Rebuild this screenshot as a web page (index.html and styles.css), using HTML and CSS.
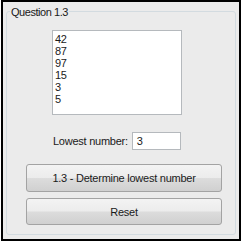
FILE: index.html
```html
<!DOCTYPE html>
<html>
<head>
<meta charset="utf-8">
<link rel="stylesheet" href="styles.css">
</head>
<body>
<div class="frame">
  <div class="group">
    <span class="legend">Question 1.3</span>
    <div class="listbox">
      <div>42</div>
      <div>87</div>
      <div>97</div>
      <div>15</div>
      <div>3</div>
      <div>5</div>
    </div>
    <div class="row">
      <span class="label">Lowest number:</span>
      <div class="input">3</div>
    </div>
    <div class="btn btn-first">1.3 - Determine lowest number</div>
    <div class="btn btn-second">Reset</div>
  </div>
</div>
</body>
</html>
```

FILE: styles.css
```css
html, body {
  margin: 0;
  padding: 0;
  background: #ffffff;
}
body {
  font-family: "Liberation Sans", Arial, sans-serif;
  font-size: 11px;
  letter-spacing: -0.25px;
  color: #1a1a1a;
}
.frame {
  margin-left: 1px;
  width: 240px;
  height: 241px;
  box-sizing: border-box;
  border: 2px solid #000;
  background: #ebebeb;
  padding: 9px 0 0 3px;
}
.group {
  position: relative;
  width: 230px;
  height: 224px;
  box-sizing: border-box;
  border: 1px solid #d3dbe0;
  border-radius: 3px;
  display: flex;
  flex-direction: column;
  align-items: flex-start;
}
.legend {
  position: absolute;
  left: 3px;
  top: -6px;
  padding: 0 1px;
  background: #ebebeb;
  font-size: 11px;
  letter-spacing: -0.45px;
  line-height: 13px;
  color: #1a1a1a;
}
.listbox {
  margin-top: 18px;
  margin-left: 45px;
  width: 130px;
  height: 85px;
  box-sizing: border-box;
  border: 1px solid #b5b9bd;
  background: #fff;
  padding: 2px 0 0 2px;
  line-height: 12px;
}
.row {
  margin-top: 17px;
  margin-left: 46px;
  display: flex;
  align-items: center;
  gap: 4px;
}
.label {
  line-height: 18px;
}
.input {
  width: 49px;
  height: 18px;
  box-sizing: border-box;
  border: 1px solid #b5b9bd;
  background: #fff;
  padding-left: 4px;
  line-height: 16px;
}
.btn {
  margin-left: 19px;
  width: 196px;
  box-sizing: border-box;
  border: 1px solid #a3a3a3;
  border-radius: 3px;
  background: linear-gradient(to bottom, #f3f3f3 0%, #ececec 48%, #dcdcdc 52%, #d0d0d0 100%);
  display: flex;
  align-items: center;
  justify-content: center;
  color: #1a1a1a;
}
.btn-first {
  margin-top: 14px;
  height: 28px;
}
.btn-second {
  margin-top: 6px;
  height: 27px;
}
```
